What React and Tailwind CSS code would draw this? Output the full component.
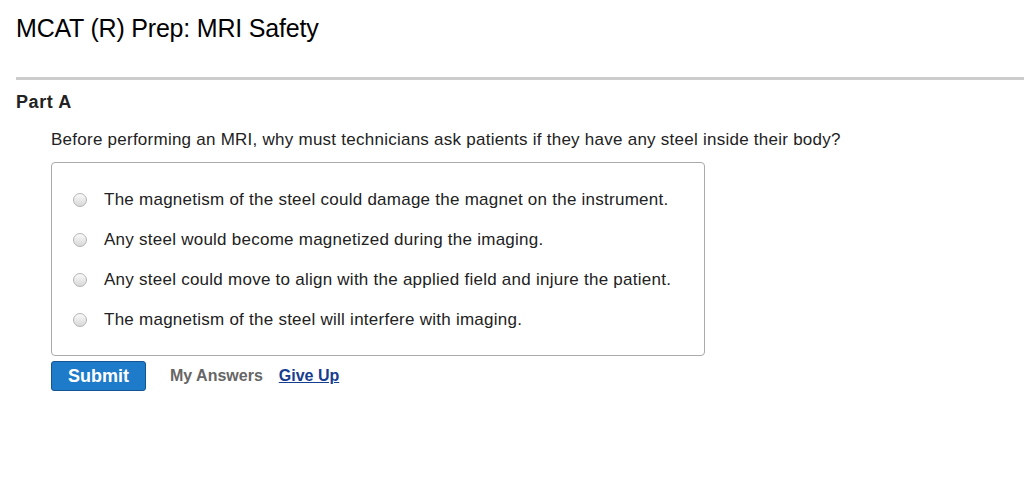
import React from 'react';

const options = [
  'The magnetism of the steel could damage the magnet on the instrument.',
  'Any steel would become magnetized during the imaging.',
  'Any steel could move to align with the applied field and injure the patient.',
  'The magnetism of the steel will interfere with imaging.',
];

export default function App() {
  return (
    <div className="w-[1024px] h-[492px] bg-white text-[#222] font-['Liberation_Sans',Arial,sans-serif]">
      <h1 className="pl-4 pt-[12px] text-[25px] leading-[32px] tracking-[-0.2px] text-black">MCAT (R) Prep: MRI Safety</h1>
      <div className="ml-4 mt-[33px] h-[3px] bg-[#cccccc]"></div>
      <h2 className="pl-4 pt-[11px] text-[18px] leading-[22px] tracking-[0.6px] font-bold text-[#222]">Part A</h2>
      <div className="pl-[51px]">
        <p className="mt-[17px] text-[17px] leading-[20px] tracking-[0.25px] text-[#222]">
          Before performing an MRI, why must technicians ask patients if they have any steel inside their body?
        </p>
        <div className="mt-[12px] w-[654px] h-[194px] border border-[#aaaaaa] rounded-[4px] pt-[17px] pl-[21px]">
          {options.map((o, i) => (
            <label key={i} className="flex items-center h-[40px] text-[17px] tracking-[0.25px] text-[#222]">
              <span className="w-[14px] h-[14px] rounded-full border border-[#b5b5b5] bg-gradient-to-b from-[#fafafa] to-[#d8d8d8] mr-[17px]"></span>
              {o}
            </label>
          ))}
        </div>
        <div className="mt-[5px] flex items-center">
          <button className="w-[95px] h-[30px] rounded-[3px] bg-[#1d7bc9] border border-[#14558f] text-white font-bold text-[18px]">Submit</button>
          <span className="ml-[24px] text-[16px] font-bold text-[#666]">My Answers</span>
          <a className="ml-[16px] text-[16px] font-bold text-[#163d8f] underline">Give Up</a>
        </div>
      </div>
    </div>
  );
}
